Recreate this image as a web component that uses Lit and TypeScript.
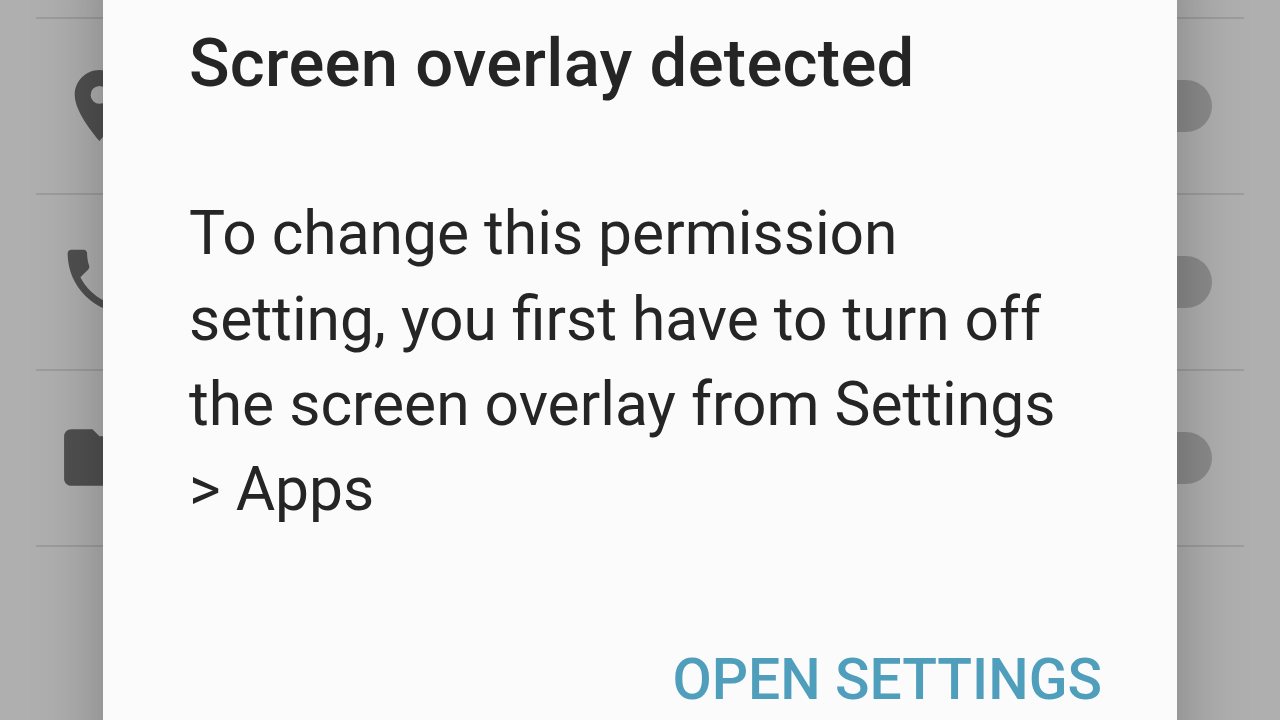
import { LitElement, html, css } from 'lit';
import { customElement } from 'lit/decorators.js';

@customElement('permission-row')
export class PermissionRow extends LitElement {
  static styles = css`
    :host {
      box-sizing: border-box;
      display: flex;
      align-items: center;
      justify-content: space-between;
      height: 176px;
      padding: 0 32px 0 21px;
      border-bottom: 2px solid #9c9c9c;
    }

    .toggle {
      width: 94px;
      height: 52px;
      border-radius: 26px;
      background: #8b8b8b;
    }
  `;

  render() {
    return html`
      <slot></slot>
      <div class="toggle"></div>
    `;
  }
}

@customElement('app-root')
export class AppRoot extends LitElement {
  static styles = css`
    :host {
      display: block;
      position: relative;
      width: 1280px;
      height: 720px;
      overflow: hidden;
      background: #afafaf;
      font-family: Roboto, sans-serif;
      color: #252525;
    }

    .list {
      margin: 0 36px;
      padding-top: 17px;
    }

    .divider {
      height: 2px;
      background: #9c9c9c;
    }

    svg {
      width: 85px;
      height: 85px;
      margin-bottom: 1px;
      fill: #505050;
    }

    .dialog {
      position: absolute;
      top: -60px;
      left: 103px;
      box-sizing: border-box;
      display: flex;
      flex-direction: column;
      width: 1074px;
      height: 860px;
      padding: 84px 75px 0 86px;
      background: #fbfbfb;
      box-shadow: 0 0 64px rgba(0, 0, 0, 0.27);
    }

    h1 {
      margin: 0;
      font-size: 67px;
      font-weight: 500;
      line-height: 78px;
      letter-spacing: 0.28px;
      white-space: nowrap;
    }

    p {
      margin: 89.4px 0 0;
      font-size: 60.5px;
      line-height: 85.3px;
      white-space: nowrap;
    }

    button {
      align-self: flex-end;
      margin-top: 113.4px;
      padding: 0;
      border: none;
      background: none;
      color: #4f9fbc;
      font: 500 57px/68px Roboto, sans-serif;
    }
  `;

  render() {
    return html`
      <div class="list">
        <div class="divider"></div>
        <permission-row>
          <svg viewBox="0 0 24 24">
            <path d="M12 2C8.13 2 5 5.13 5 9c0 5.25 7 13 7 13s7-7.75 7-13c0-3.87-3.13-7-7-7zm0 9.5a2.5 2.5 0 1 1 0-5 2.5 2.5 0 0 1 0 5z"></path>
          </svg>
        </permission-row>
        <permission-row>
          <svg viewBox="0 0 24 24">
            <path d="M6.62 10.79c1.44 2.83 3.76 5.14 6.59 6.59l2.2-2.2c.27-.27.67-.36 1.02-.24 1.12.37 2.33.57 3.57.57.55 0 1 .45 1 1V20c0 .55-.45 1-1 1-9.39 0-17-7.61-17-17 0-.55.45-1 1-1h3.5c.55 0 1 .45 1 1 0 1.25.2 2.45.57 3.57.11.35.03.74-.25 1.02l-2.2 2.2z"></path>
          </svg>
        </permission-row>
        <permission-row>
          <svg viewBox="0 0 24 24">
            <path d="M10 4H4c-1.1 0-2 .9-2 2v12c0 1.1.9 2 2 2h16c1.1 0 2-.9 2-2V8c0-1.1-.9-2-2-2h-8l-2-2z"></path>
          </svg>
        </permission-row>
      </div>
      <div class="dialog" role="dialog">
        <h1>Screen overlay detected</h1>
        <p>
          To change this permission<br />setting, you first have to turn off<br />the screen overlay from Settings<br />&gt; Apps
        </p>
        <button>OPEN SETTINGS</button>
      </div>
    `;
  }
}
